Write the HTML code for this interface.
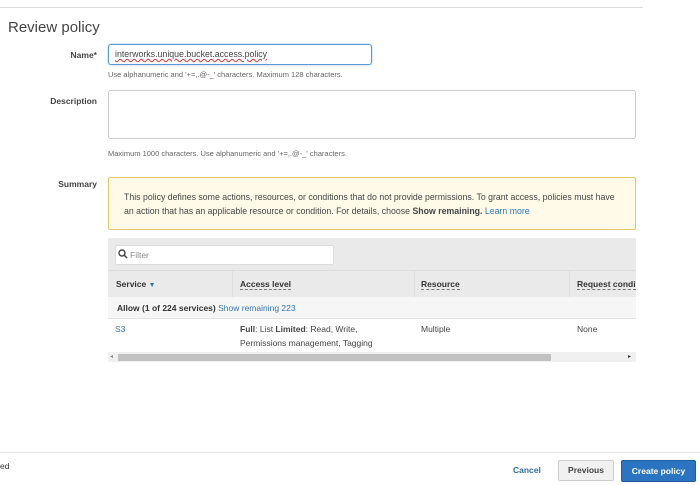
<!DOCTYPE html><html><head><style>
body{margin:0;width:700px;height:485px;background:#fff;font-family:"Liberation Sans",sans-serif;position:relative;overflow:hidden;color:#444}
.a{position:absolute;white-space:nowrap}
.lbl{font-size:8.5px;font-weight:bold;color:#444;text-align:right;width:97px;left:0}
.help{font-size:7.5px;color:#666;left:108px}
.th{font-size:8.5px;font-weight:bold;color:#333}
.dot{border-bottom:1px dashed #777}
.td{font-size:8.5px;color:#444}
a{color:#2f76b5;text-decoration:none}
</style></head><body>
<div class="a" style="left:0;top:7px;width:643px;height:1px;background:#ddd"></div>
<div class="a" style="left:8px;top:19px;font-size:15px;color:#444">Review policy</div>
<div class="a lbl" style="top:50px">Name*</div>
<div class="a" style="left:108px;top:44px;width:262px;height:19px;border:1px solid #5b9bd5;border-radius:3px;box-shadow:0 0 2px #9cc3e8"></div>
<div class="a" style="left:115px;top:49px;font-size:8.8px;color:#444;text-decoration:underline wavy #d33;text-decoration-thickness:1px">interworks.unique.bucket.access.policy</div>
<div class="a help" style="top:70px">Use alphanumeric and '+=,.@-_' characters. Maximum 128 characters.</div>
<div class="a lbl" style="top:96px">Description</div>
<div class="a" style="left:108px;top:90px;width:526px;height:47px;border:1px solid #ccc;border-radius:3px"></div>
<div class="a help" style="top:149px">Maximum 1000 characters. Use alphanumeric and '+=,.@-_' characters.</div>
<div class="a lbl" style="top:179px">Summary</div>
<div class="a" style="left:108px;top:177px;width:526px;height:51px;background:#fffbe8;border:1px solid #e3c76b;border-radius:2px"></div>
<div class="a td" style="left:124px;top:190px;line-height:14px;font-size:8.75px">This policy defines some actions, resources, or conditions that do not provide permissions. To grant access, policies must have<br>an action that has an applicable resource or condition. For details, choose <b>Show remaining.</b> <a>Learn more</a></div>
<div class="a" style="left:108px;top:238px;width:528px;height:59px;background:#eaeaea"></div>
<div class="a" style="left:115px;top:245px;width:217px;height:18px;background:#fff;border-radius:2px;border:1px solid #ddd"></div>
<svg class="a" style="left:118px;top:249px" width="10" height="10"><circle cx="4" cy="4" r="3" fill="none" stroke="#444" stroke-width="1.4"/><path d="M6 6L9 9" stroke="#444" stroke-width="1.5"/></svg>
<div class="a" style="left:130px;top:250px;font-size:8.5px;color:#888">Filter</div>
<div class="a" style="left:108px;top:270px;width:528px;height:1px;background:#ddd"></div>
<div class="a" style="left:232px;top:270px;width:1px;height:27px;background:#ddd"></div>
<div class="a" style="left:414px;top:270px;width:1px;height:27px;background:#ddd"></div>
<div class="a" style="left:569px;top:270px;width:1px;height:27px;background:#ddd"></div>
<div class="a th" style="left:116px;top:279px">Service <span style="color:#2f76b5;font-size:7px">▼</span></div>
<div class="a th dot" style="left:240px;top:279px">Access level</div>
<div class="a th dot" style="left:421px;top:279px">Resource</div>
<div class="a th dot" style="left:577px;top:279px">Request condi</div>
<div class="a" style="left:108px;top:297px;width:528px;height:21px;background:#f6f6f6;border-bottom:1px solid #e3e3e3"></div>
<div class="a th" style="left:117px;top:303px">Allow (1 of 224 services) <a style="font-weight:normal">Show remaining 223</a></div>
<div class="a td" style="left:115px;top:324px"><a>S3</a></div>
<div class="a td" style="left:240px;top:323px;line-height:13.5px"><b>Full</b>: List <b>Limited</b>: Read, Write,<br>Permissions management, Tagging</div>
<div class="a td" style="left:421px;top:324px">Multiple</div>
<div class="a td" style="left:577px;top:324px">None</div>
<div class="a" style="left:108px;top:352px;width:528px;height:10px;background:#f0f0f0"></div>
<div class="a" style="left:118px;top:354px;width:433px;height:7px;background:#c2c2c2"></div>
<div class="a" style="left:110px;top:353px;font-size:6px;color:#888">◂</div>
<div class="a" style="left:628px;top:353px;font-size:6px;color:#333">▸</div>
<div class="a" style="left:0;top:452px;width:700px;height:1px;background:#e5e5e5"></div>
<div class="a" style="left:0;top:461px;font-size:8.5px;color:#333">ed</div>
<div class="a" style="left:513px;top:465px;font-size:8.5px;font-weight:bold;color:#2f6d9f">Cancel</div>
<div class="a" style="left:558px;top:460px;width:54px;height:19px;background:#f1f1f1;border:1px solid #ccc;border-radius:2px;font-size:8.5px;font-weight:bold;color:#444;text-align:center;line-height:19px">Previous</div>
<div class="a" style="left:621px;top:460px;width:73px;height:20px;background:#2a74c1;border:1px solid #1c5c9f;border-radius:2px;font-size:8.5px;font-weight:bold;color:#fff;text-align:center;line-height:20px">Create policy</div>
</body></html>
